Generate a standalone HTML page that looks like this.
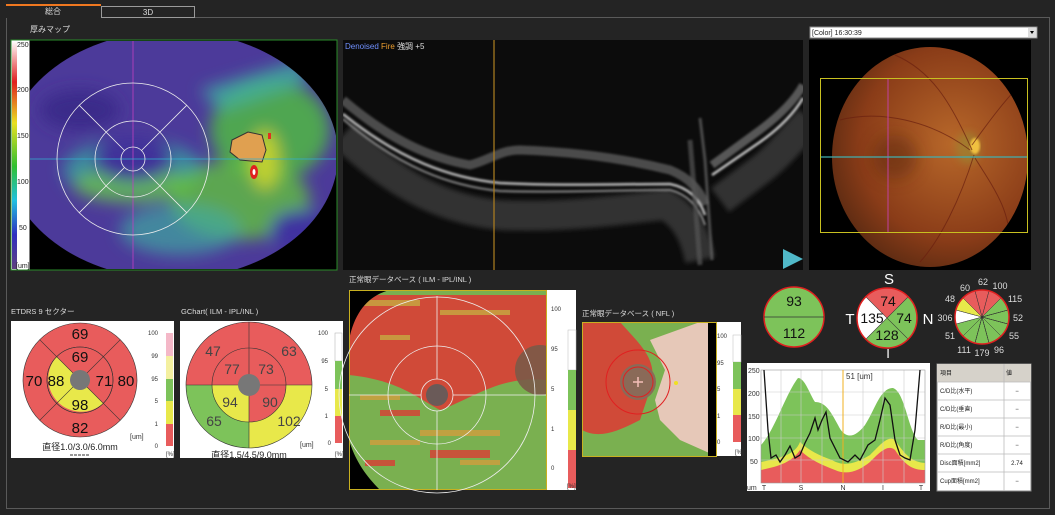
<!DOCTYPE html>
<html><head><meta charset="utf-8"><style>
html,body{margin:0;padding:0;background:#242424;}
svg{display:block}
text{font-family:"Liberation Sans","Noto Sans CJK JP",sans-serif;}
</style></head><body>
<svg width="1055" height="515" viewBox="0 0 1055 515" xmlns="http://www.w3.org/2000/svg">
<defs>
<filter id="b4" x="-50%" y="-50%" width="200%" height="200%"><feGaussianBlur stdDeviation="4"/></filter>
<filter id="b8" x="-50%" y="-50%" width="200%" height="200%"><feGaussianBlur stdDeviation="8"/></filter>
<filter id="b1"><feGaussianBlur stdDeviation="1"/></filter>
<filter id="b2" x="-20%" y="-20%" width="140%" height="140%"><feGaussianBlur stdDeviation="2.5"/></filter>
<linearGradient id="cb" x1="0" y1="0" x2="0" y2="1">
<stop offset="0" stop-color="#fff"/><stop offset="0.18" stop-color="#e02020"/><stop offset="0.36" stop-color="#e8e020"/><stop offset="0.55" stop-color="#30c030"/><stop offset="0.7" stop-color="#20c0e0"/><stop offset="0.85" stop-color="#3030c0"/><stop offset="1" stop-color="#604080"/></linearGradient>
<radialGradient id="fund" cx="0.65" cy="0.45" r="0.6"><stop offset="0" stop-color="#b8682a"/><stop offset="0.7" stop-color="#8a3c18"/><stop offset="1" stop-color="#5a2a12"/></radialGradient>
<clipPath id="tm"><ellipse cx="172" cy="155" rx="166" ry="124"/></clipPath>
<clipPath id="tmr"><rect x="30" y="41" width="306" height="228"/></clipPath>
<clipPath id="oct"><rect x="343" y="40" width="460" height="230"/></clipPath>
<clipPath id="fd"><rect x="809" y="40" width="222" height="230"/></clipPath>
<clipPath id="fc"><ellipse cx="930" cy="157" rx="98" ry="110"/></clipPath>
<clipPath id="nb"><rect x="350" y="291" width="196" height="199"/></clipPath>
<clipPath id="nf"><rect x="583" y="323" width="133" height="133"/></clipPath>
<clipPath id="gr"><rect x="761" y="370" width="164" height="113"/></clipPath>
</defs>
<rect width="1055" height="515" fill="#242424"/>
<rect x="6.5" y="17.5" width="1043" height="491" fill="none" stroke="#5a5a5a"/>
<rect x="6" y="5" width="95" height="13" fill="#242424"/>
<line x1="6" y1="5" x2="101" y2="5" stroke="#f07820" stroke-width="2"/>
<text x="53" y="14" font-size="8" fill="#ddd" text-anchor="middle">総合</text>
<rect x="101.5" y="6.5" width="93" height="11" fill="#242424" stroke="#9a9a9a"/>
<text x="148" y="15" font-size="8" fill="#ddd" text-anchor="middle">3D</text>
<text x="30" y="32" font-size="8" fill="#ddd">厚みマップ</text>

<!-- thickness map -->
<rect x="11" y="40" width="326" height="230" fill="#000" stroke="#2a8a2a"/>
<rect x="11.5" y="40.5" width="18" height="229" fill="#fff"/>
<rect x="12" y="41" width="5" height="228" fill="url(#cb)"/>
<g font-size="7" fill="#222"><text x="17" y="47">250</text><text x="17" y="92">200</text><text x="17" y="138">150</text><text x="17" y="184">100</text><text x="19" y="230">50</text><text x="16" y="268">[um]</text></g>
<g clip-path="url(#tmr)"><g clip-path="url(#tm)">
<rect x="0" y="0" width="340" height="280" fill="#4c3a9a"/>
<g filter="url(#b8)">
<ellipse cx="133" cy="170" rx="70" ry="30" fill="#3aa0a0" opacity="0.8"/>
<ellipse cx="133" cy="185" rx="60" ry="18" fill="#70c040" opacity="0.7"/>
<ellipse cx="133" cy="159" rx="40" ry="22" fill="#40309a"/>
<ellipse cx="270" cy="130" rx="60" ry="50" fill="#50c040" opacity="0.8"/>
<ellipse cx="240" cy="200" rx="70" ry="40" fill="#60c040" opacity="0.8"/>
<ellipse cx="180" cy="230" rx="60" ry="25" fill="#40a8a0" opacity="0.7"/>
<path d="M200 90 L300 60 L310 80 L220 110Z" fill="#40b0a0" opacity="0.8"/>
<ellipse cx="265" cy="160" rx="15" ry="30" fill="#c0d030"/>
<ellipse cx="80" cy="110" rx="40" ry="20" fill="#3a2a8a"/>
<ellipse cx="300" cy="230" rx="30" ry="20" fill="#4030a0"/>
</g>
<path d="M232 140 L248 132 L262 135 L266 150 L262 162 L240 160 L230 152Z" fill="#e0a050" stroke="#333" stroke-width="1"/>
<ellipse cx="254" cy="172" rx="4" ry="7" fill="#e02020"/>
<ellipse cx="254" cy="172" rx="1.5" ry="3" fill="#fff"/>
<rect x="268" y="133" width="3" height="6" fill="#e03020"/>
</g></g>
<line x1="133" y1="41" x2="133" y2="269" stroke="#c040c0" stroke-width="0.8"/>
<line x1="30" y1="159" x2="336" y2="159" stroke="#30b0d0" stroke-width="0.8"/>
<g fill="none" stroke="#eee" stroke-width="0.8">
<circle cx="133" cy="159" r="76"/><circle cx="133" cy="159" r="38"/><circle cx="133" cy="159" r="12"/>
<path d="M79.3 105.3L124.5 150.5M141.5 167.5L186.7 212.7M186.7 105.3L141.5 150.5M124.5 167.5L79.3 212.7"/>
</g>

<!-- OCT -->
<rect x="343" y="40" width="460" height="230" fill="#0c0c0c"/>
<g clip-path="url(#oct)" fill="none">
<g filter="url(#b2)">
<path d="M343 135 C400 190 450 210 500 215 C560 218 620 210 665 205 C685 215 695 235 700 260" stroke="#333" stroke-width="30"/>
<path d="M720 200 L760 170 C780 155 795 135 810 120" stroke="#333" stroke-width="30"/>
</g>
<g filter="url(#b1)">
<path d="M343 100 C390 140 430 158 470 165 C490 160 500 150 520 150 C580 152 630 160 670 170 C690 178 700 190 705 205" stroke="#666" stroke-width="9" opacity="0.7"/>
<path d="M343 114 C400 160 450 178 500 183 C560 186 620 184 670 184 C690 188 700 200 705 215" stroke="#bbb" stroke-width="2.5"/>
<path d="M343 119 C400 168 450 186 500 191 C560 193 620 190 670 190 C690 195 700 210 705 225" stroke="#888" stroke-width="2"/>
<path d="M712 165 L760 130 C780 115 795 100 803 85" stroke="#777" stroke-width="8" opacity="0.7"/>
<path d="M712 175 L760 142 C780 128 795 112 803 98" stroke="#c8c8c8" stroke-width="2.5"/>
<path d="M690 140 L695 200 L700 265" stroke="#555" stroke-width="5" opacity="0.7"/>
<path d="M700 118 L705 160 L712 260" stroke="#666" stroke-width="3" opacity="0.7"/>
</g>
</g>
<line x1="494" y1="40" x2="494" y2="270" stroke="#b08020" stroke-width="1.2"/>
<text x="345" y="49" font-size="8"><tspan fill="#7090ff">Denoised</tspan> <tspan fill="#f0a030">Fire</tspan> <tspan fill="#ddd">強調 +5</tspan></text>
<path d="M783 249 L803 259 L783 269Z" fill="#50b8c8"/>

<!-- fundus -->
<rect x="810" y="27" width="227" height="11" fill="#fff" stroke="#888"/>
<text x="812" y="35" font-size="7" fill="#222">[Color] 16:30:39</text>
<rect x="1028" y="28" width="8" height="9" fill="#ddd"/><path d="M1030 31h4l-2 3z" fill="#000"/>
<rect x="809" y="40" width="222" height="230" fill="#000"/>
<g clip-path="url(#fd)"><g clip-path="url(#fc)">
<rect x="809" y="40" width="222" height="230" fill="url(#fund)"/>
<ellipse cx="895" cy="157" rx="22" ry="22" fill="#5a2810" opacity="0.5" filter="url(#b8)"/>
<ellipse cx="968" cy="148" rx="12" ry="16" fill="#9a8a30" opacity="0.6" filter="url(#b4)"/>
<ellipse cx="975" cy="146" rx="5" ry="8" fill="#f0c040" filter="url(#b1)"/>
<g fill="none" stroke="#6a2010" stroke-width="1" opacity="0.7"><path d="M972 150 C950 100 930 70 895 55"/><path d="M974 155 C960 200 940 240 920 262"/><path d="M972 145 C990 120 1005 100 1020 85"/><path d="M975 158 C995 190 1010 210 1010 245"/><path d="M970 150 C930 120 880 110 840 120"/></g>
</g></g>
<rect x="820.5" y="78.5" width="207" height="154" fill="none" stroke="#c8c020" stroke-width="1"/>
<line x1="888" y1="79" x2="888" y2="232" stroke="#c040a0" stroke-width="1"/>
<line x1="821" y1="157" x2="1027" y2="157" stroke="#40b0b0" stroke-width="1.2"/>

<!-- ETDRS -->
<text x="11" y="314" font-size="7.5" fill="#ddd">ETDRS 9 セクター</text>
<rect x="11" y="321" width="163" height="137" fill="#fff"/>
<circle cx="80" cy="380" r="57" fill="#e85c5c" stroke="#333" stroke-width="0.6"/>
<circle cx="80" cy="380" r="33" fill="#e85c5c" stroke="#333" stroke-width="0.6"/>
<path d="M80 380 L56.7 356.7 A33 33 0 0 0 103.3 403.3Z" fill="#e8e84a"/>
<circle cx="80" cy="380" r="33" fill="none" stroke="#333" stroke-width="0.6"/>
<path d="M39.7 339.7L120.3 420.3M120.3 339.7L39.7 420.3" stroke="#333" stroke-width="0.6"/>
<circle cx="80" cy="380" r="10" fill="#777"/>
<g font-size="15" fill="#111" text-anchor="middle"><text x="80" y="339">69</text><text x="80" y="362">69</text><text x="34" y="386">70</text><text x="56" y="386">88</text><text x="104" y="386">71</text><text x="126" y="386">80</text><text x="80" y="410">98</text><text x="80" y="433">82</text></g>
<text x="80" y="450" font-size="9" fill="#222" text-anchor="middle">直径1.0/3.0/6.0mm</text>
<line x1="70" y1="455" x2="90" y2="455" stroke="#333" stroke-dasharray="3 1"/>
<rect x="166" y="333" width="7" height="23" fill="#f4b8c8"/><rect x="166" y="356" width="7" height="23" fill="#f4f0a0"/><rect x="166" y="379" width="7" height="22" fill="#7dc35a"/><rect x="166" y="401" width="7" height="23" fill="#e8e84a"/><rect x="166" y="424" width="7" height="22" fill="#e85c5c"/>
<g font-size="6" fill="#333" text-anchor="end"><text x="158" y="335">100</text><text x="158" y="358">99</text><text x="158" y="381">95</text><text x="158" y="403">5</text><text x="158" y="426">1</text><text x="158" y="448">0</text></g>
<text x="130" y="439" font-size="7" fill="#333">[um]</text><text x="166" y="456" font-size="6" fill="#333">[%]</text>

<!-- GChart -->
<text x="181" y="314" font-size="7.5" fill="#ddd">GChart( ILM - IPL/INL )</text>
<rect x="180" y="321" width="163" height="137" fill="#fff"/>
<path d="M186 385 A63 63 0 0 1 312 385Z" fill="#e85c5c"/>
<path d="M249 385 L186 385 A63 63 0 0 0 249 448Z" fill="#7dc35a"/>
<path d="M249 385 L249 448 A63 63 0 0 0 312 385Z" fill="#e8e84a"/>
<path d="M212 385 A37 37 0 0 1 286 385Z" fill="#e85c5c"/>
<path d="M249 385 L212 385 A37 37 0 0 0 249 422Z" fill="#e8e84a"/>
<path d="M249 385 L249 422 A37 37 0 0 0 286 385Z" fill="#e85c5c"/>
<g fill="none" stroke="#333" stroke-width="0.6"><circle cx="249" cy="385" r="63"/><circle cx="249" cy="385" r="37"/><path d="M249 322V448M186 385H312"/></g>
<circle cx="249" cy="385" r="11" fill="#777"/>
<g font-size="14" fill="#444" text-anchor="middle"><text x="213" y="356">47</text><text x="289" y="356">63</text><text x="232" y="374">77</text><text x="266" y="374">73</text><text x="230" y="407">94</text><text x="270" y="407">90</text><text x="214" y="426">65</text><text x="289" y="426">102</text></g>
<text x="249" y="458" font-size="9" fill="#222" text-anchor="middle">直径1.5/4.5/9.0mm</text>
<rect x="335" y="333" width="7" height="28" fill="#fff" stroke="#aaa" stroke-width="0.5"/><rect x="335" y="361" width="7" height="28" fill="#7dc35a"/><rect x="335" y="389" width="7" height="27" fill="#e8e84a"/><rect x="335" y="416" width="7" height="27" fill="#e85c5c"/>
<g font-size="6" fill="#333" text-anchor="end"><text x="328" y="335">100</text><text x="328" y="363">95</text><text x="328" y="391">5</text><text x="328" y="418">1</text><text x="331" y="445">0</text></g>
<text x="300" y="447" font-size="7" fill="#333">[um]</text><text x="335" y="456" font-size="6" fill="#333">[%]</text>

<!-- normal DB big -->
<text x="349" y="282" font-size="7.5" fill="#ddd">正常眼データベース ( ILM - IPL/INL )</text>
<rect x="546" y="290" width="30" height="200" fill="#fff"/>
<g clip-path="url(#nb)">
<rect x="349" y="290" width="200" height="200" fill="#7ab050"/>
<path d="M349 295 H546 V380 C500 375 470 400 440 410 C420 400 400 380 349 375Z" fill="#d04a38"/>
<g fill="#c8a040" opacity="0.9"><rect x="360" y="300" width="60" height="6"/><rect x="440" y="310" width="70" height="5"/><rect x="380" y="335" width="30" height="5"/><rect x="360" y="395" width="40" height="5"/><rect x="420" y="430" width="80" height="6"/><rect x="370" y="440" width="50" height="5"/><rect x="460" y="460" width="40" height="5"/></g>
<g fill="#d04a38" opacity="0.9"><rect x="380" y="410" width="40" height="6"/><rect x="430" y="450" width="60" height="8"/><rect x="365" y="460" width="30" height="6"/></g>
<path d="M349 290 L349 340 C355 310 370 295 390 290Z" fill="#000"/>
<path d="M349 440 L349 490 L380 490 C365 475 355 460 349 440Z" fill="#000"/>
<circle cx="540" cy="370" r="25" fill="#7a5a48" opacity="0.9"/>
</g>
<rect x="349.5" y="290.5" width="197" height="199" fill="none" stroke="#c8b020"/>
<g fill="none" stroke="#eee" stroke-width="0.8"><circle cx="437" cy="395" r="98"/><circle cx="437" cy="395" r="49"/><circle cx="437" cy="395" r="16"/><path d="M437 296V379M437 411V490M349 395H421M453 395H546"/></g>
<circle cx="437" cy="395" r="11" fill="#6a5a58"/>
<rect x="568" y="330" width="8" height="40" fill="#fff" stroke="#bbb" stroke-width="0.5"/><rect x="568" y="370" width="8" height="40" fill="#7dc35a"/><rect x="568" y="410" width="8" height="40" fill="#e8e84a"/><rect x="568" y="450" width="8" height="38" fill="#e85c5c"/>
<g font-size="6" fill="#333"><text x="551" y="311">100</text><text x="551" y="351">95</text><text x="551" y="391">5</text><text x="551" y="431">1</text><text x="551" y="470">0</text><text x="567" y="488">[%]</text></g>

<!-- NFL -->
<text x="582" y="316" font-size="7.5" fill="#ddd">正常眼データベース ( NFL )</text>
<rect x="716" y="322" width="25" height="134" fill="#fff"/>
<g clip-path="url(#nf)">
<rect x="582" y="322" width="134" height="134" fill="#7ab050"/>
<path d="M582 322 H620 C640 345 660 360 650 390 L640 420 C620 430 600 440 582 430Z" fill="#d04a38"/>
<path d="M650 340 L700 322 L716 322 L716 456 L680 440 L660 420 L655 400 L665 370Z" fill="#e6c8b8"/>
<rect x="708" y="322" width="10" height="134" fill="#000"/>
<circle cx="638" cy="382" r="18" fill="#8a6a58"/>
</g>
<rect x="582.5" y="322.5" width="134" height="134" fill="none" stroke="#c8b020"/>
<circle cx="638" cy="382" r="32" fill="none" stroke="#e02020" stroke-width="1"/>
<circle cx="638" cy="382" r="15" fill="none" stroke="#e02020" stroke-width="1"/>
<path d="M633 382h10M638 377v10" stroke="#f4c0b8" stroke-width="1.5"/>
<circle cx="676" cy="383" r="2" fill="#f0e020"/>
<rect x="733" y="335" width="8" height="27" fill="#fff" stroke="#bbb" stroke-width="0.5"/><rect x="733" y="362" width="8" height="27" fill="#7dc35a"/><rect x="733" y="389" width="8" height="26" fill="#e8e84a"/><rect x="733" y="415" width="8" height="27" fill="#e85c5c"/>
<g font-size="6" fill="#333"><text x="717" y="338">100</text><text x="717" y="365">95</text><text x="717" y="391">5</text><text x="717" y="418">1</text><text x="717" y="444">0</text><text x="735" y="454">[%]</text></g>

<!-- circles -->
<circle cx="794" cy="317" r="30" fill="#7dc35a" stroke="#e02020" stroke-width="1.5"/>
<line x1="764" y1="317" x2="824" y2="317" stroke="#333" stroke-width="0.8"/>
<g font-size="14" fill="#111" text-anchor="middle"><text x="794" y="306">93</text><text x="794" y="338">112</text></g>

<circle cx="887" cy="318" r="30" fill="#7dc35a"/>
<path d="M887 318 L865.8 296.8 A30 30 0 0 1 908.2 296.8Z" fill="#e85c5c"/>
<path d="M887 318 L865.8 296.8 A30 30 0 0 0 865.8 339.2Z" fill="#fff"/>
<path d="M865.8 296.8L908.2 339.2M908.2 296.8L865.8 339.2" stroke="#333" stroke-width="0.6"/>
<circle cx="887" cy="318" r="30" fill="none" stroke="#e02020" stroke-width="1.5"/>
<g font-size="14" fill="#111" text-anchor="middle"><text x="888" y="306">74</text><text x="872" y="323">135</text><text x="904" y="323">74</text><text x="887" y="340">128</text></g>
<g font-size="15" fill="#fff" text-anchor="middle"><text x="889" y="284">S</text><text x="850" y="324">T</text><text x="928" y="324">N</text><text x="888" y="358" font-size="13">I</text></g>

<g stroke="#333" stroke-width="0.5">
<path d="M982 317 L975 291 A27 27 0 0 1 989 291Z" fill="#e85c5c"/>
<path d="M982 317 L989 291 A27 27 0 0 1 1001 298Z" fill="#e85c5c"/>
<path d="M982 317 L1001 298 A27 27 0 0 1 1008 310 L982 317 L1008 310 A27 27 0 0 1 1008 324 L982 317 L1008 324 A27 27 0 0 1 1001 336 L982 317 L1001 336 A27 27 0 0 1 989 343 L982 317 L989 343 A27 27 0 0 1 975 343 L982 317 L975 343 A27 27 0 0 1 963 336 L982 317 L963 336 A27 27 0 0 1 956 324Z" fill="#7dc35a"/>
<path d="M982 317 L956 324 A27 27 0 0 1 956 310Z" fill="#fff"/>
<path d="M982 317 L956 310 A27 27 0 0 1 963 298Z" fill="#e8e84a"/>
<path d="M982 317 L963 298 A27 27 0 0 1 975 291Z" fill="#e85c5c"/>
<path d="M982 317L1008 310M982 317L1008 324M982 317L1001 336M982 317L989 343M982 317L975 343M982 317L963 336" fill="none"/>
</g>
<circle cx="982" cy="317" r="27" fill="none" stroke="#e02020" stroke-width="1.5"/>
<g font-size="9" fill="#ddd" text-anchor="middle"><text x="965" y="291">60</text><text x="983" y="285">62</text><text x="1000" y="289">100</text><text x="1015" y="302">115</text><text x="1018" y="321">52</text><text x="1014" y="339">55</text><text x="999" y="353">96</text><text x="982" y="356">179</text><text x="964" y="353">111</text><text x="950" y="339">51</text><text x="945" y="321">306</text><text x="950" y="302">48</text></g>

<!-- graph -->
<rect x="747" y="363" width="183" height="128" fill="#fff"/>
<g clip-path="url(#gr)">
<path d="M761 445 C775 430 785 395 798 378 C805 378 810 395 815 402 C825 402 830 410 838 425 C845 440 855 438 865 425 C875 410 880 388 893 388 C905 392 908 430 918 440 L925 440 V483 H761Z" fill="#7dc35a"/>
<path d="M761 462 C780 458 795 455 800 442 C808 450 820 456 832 460 C845 468 858 462 870 455 C880 445 888 435 895 440 C905 455 912 462 925 463 V483 H761Z" fill="#e8e84a"/>
<path d="M761 470 C780 466 792 462 800 450 C810 460 822 465 835 470 C848 476 860 470 870 462 C880 452 888 444 895 450 C905 465 912 470 925 470 V483 H761Z" fill="#e85c5c"/>
</g>
<g stroke="#ccc" stroke-width="0.6"><path d="M781 370V483M801 370V483M822 370V483M843 370V483M863 370V483M883 370V483M904 370V483M761 392H925M761 415H925M761 438H925M761 460H925"/></g>
<rect x="761" y="370" width="164" height="113" fill="none" stroke="#999" stroke-width="0.6"/>
<line x1="843" y1="370" x2="843" y2="483" stroke="#f0b020" stroke-width="1"/>
<path d="M764 370 L768 430 L771 458 L776 455 L780 462 L785 455 L790 446 L795 458 L800 455 L805 443 L810 433 L815 418 L818 430 L822 420 L826 412 L830 438 L840 458 L848 462 L855 455 L860 460 L868 445 L875 440 L880 420 L885 398 L890 405 L895 440 L900 455 L905 458 L910 460 L915 430 L920 370" fill="none" stroke="#111" stroke-width="1.3"/>
<text x="846" y="379" font-size="8" fill="#333">51 [um]</text>
<g font-size="7" fill="#333"><text x="748" y="373">250</text><text x="748" y="396">200</text><text x="748" y="419">150</text><text x="748" y="441">100</text><text x="750" y="464">50</text><text x="747" y="490">um</text></g>
<g font-size="7" fill="#333" text-anchor="middle"><text x="764" y="490">T</text><text x="801" y="490">S</text><text x="843" y="490">N</text><text x="883" y="490">I</text><text x="921" y="490">T</text></g>

<!-- table -->
<rect x="937" y="364" width="94" height="127" fill="#fff" stroke="#888"/>
<rect x="937" y="364" width="94" height="18" fill="#d6d2ca"/>
<g stroke="#bbb" stroke-width="0.8"><path d="M1004 364V491M937 382H1031M937 400H1031M937 418H1031M937 436H1031M937 454H1031M937 472H1031"/></g>
<g font-size="6" fill="#222"><text x="940" y="375">項目</text><text x="1006" y="375">値</text>
<text x="940" y="393">C/D比(水平)</text><text x="940" y="411">C/D比(垂直)</text><text x="940" y="429">R/D比(最小)</text><text x="940" y="447">R/D比(角度)</text><text x="940" y="465">Disc面積[mm2]</text><text x="940" y="483">Cup面積[mm2]</text></g>
<g font-size="6" fill="#222" text-anchor="middle"><text x="1017" y="393">−</text><text x="1017" y="411">−</text><text x="1017" y="429">−</text><text x="1017" y="447">−</text><text x="1017" y="465">2.74</text><text x="1017" y="483">−</text></g>
</svg>
</body></html>
